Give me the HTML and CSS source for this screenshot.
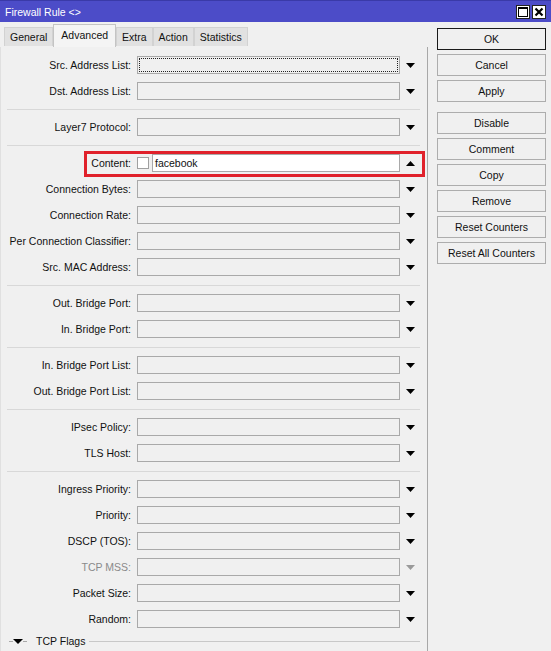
FILE: index.html
```html
<!DOCTYPE html>
<html lang="en">
<head>
    <meta charset="UTF-8">
    <title>Firewall Rule</title>
    <link rel="stylesheet" href="styles.css">
</head>
<body>

<div class="window">
    <div class="titlebar">
        <span class="title">Firewall Rule &lt;&gt;</span>
        <div class="wbtns">
            <span class="wbtn">
                <svg width="10" height="10" viewBox="0 0 10 10"><rect x="0.5" y="0.5" width="9" height="9" fill="none" stroke="#000"/><rect x="0" y="0" width="10" height="2" fill="#000"/></svg>
            </span>
            <span class="wbtn">
                <svg width="10" height="10" viewBox="0 0 10 10"><path d="M1.5 1.5 L8.5 8.5 M8.5 1.5 L1.5 8.5" stroke="#000" stroke-width="2.2"/></svg>
            </span>
        </div>
    </div>

    <div class="main">
        <div class="left">
            <div class="tabs">
                <span class="tab">General</span>
                <span class="tab active">Advanced</span>
                <span class="tab">Extra</span>
                <span class="tab">Action</span>
                <span class="tab">Statistics</span>
            </div>

            <div class="panel">
                <div class="row">
                    <label>Src. Address List:</label>
                    <span class="field focus"></span>
                    <span class="arrow"><svg width="9" height="5"><polygon points="0,0 9,0 4.5,5"/></svg></span>
                </div>
                <div class="row">
                    <label>Dst. Address List:</label>
                    <span class="field"></span>
                    <span class="arrow"><svg width="9" height="5"><polygon points="0,0 9,0 4.5,5"/></svg></span>
                </div>

                <div class="sep"></div>

                <div class="row">
                    <label>Layer7 Protocol:</label>
                    <span class="field"></span>
                    <span class="arrow"><svg width="9" height="5"><polygon points="0,0 9,0 4.5,5"/></svg></span>
                </div>

                <div class="sep"></div>

                <div class="row marked">
                    <label>Content:</label>
                    <span class="check"></span>
                    <span class="field value">facebook</span>
                    <span class="arrow"><svg width="9" height="5"><polygon points="0,5 9,5 4.5,0"/></svg></span>
                </div>
                <div class="row">
                    <label>Connection Bytes:</label>
                    <span class="field"></span>
                    <span class="arrow"><svg width="9" height="5"><polygon points="0,0 9,0 4.5,5"/></svg></span>
                </div>
                <div class="row">
                    <label>Connection Rate:</label>
                    <span class="field"></span>
                    <span class="arrow"><svg width="9" height="5"><polygon points="0,0 9,0 4.5,5"/></svg></span>
                </div>
                <div class="row">
                    <label>Per Connection Classifier:</label>
                    <span class="field"></span>
                    <span class="arrow"><svg width="9" height="5"><polygon points="0,0 9,0 4.5,5"/></svg></span>
                </div>
                <div class="row">
                    <label>Src. MAC Address:</label>
                    <span class="field"></span>
                    <span class="arrow"><svg width="9" height="5"><polygon points="0,0 9,0 4.5,5"/></svg></span>
                </div>

                <div class="sep"></div>

                <div class="row">
                    <label>Out. Bridge Port:</label>
                    <span class="field"></span>
                    <span class="arrow"><svg width="9" height="5"><polygon points="0,0 9,0 4.5,5"/></svg></span>
                </div>
                <div class="row">
                    <label>In. Bridge Port:</label>
                    <span class="field"></span>
                    <span class="arrow"><svg width="9" height="5"><polygon points="0,0 9,0 4.5,5"/></svg></span>
                </div>

                <div class="sep"></div>

                <div class="row">
                    <label>In. Bridge Port List:</label>
                    <span class="field"></span>
                    <span class="arrow"><svg width="9" height="5"><polygon points="0,0 9,0 4.5,5"/></svg></span>
                </div>
                <div class="row">
                    <label>Out. Bridge Port List:</label>
                    <span class="field"></span>
                    <span class="arrow"><svg width="9" height="5"><polygon points="0,0 9,0 4.5,5"/></svg></span>
                </div>

                <div class="sep"></div>

                <div class="row">
                    <label>IPsec Policy:</label>
                    <span class="field"></span>
                    <span class="arrow"><svg width="9" height="5"><polygon points="0,0 9,0 4.5,5"/></svg></span>
                </div>
                <div class="row">
                    <label>TLS Host:</label>
                    <span class="field"></span>
                    <span class="arrow"><svg width="9" height="5"><polygon points="0,0 9,0 4.5,5"/></svg></span>
                </div>

                <div class="sep"></div>

                <div class="row">
                    <label>Ingress Priority:</label>
                    <span class="field"></span>
                    <span class="arrow"><svg width="9" height="5"><polygon points="0,0 9,0 4.5,5"/></svg></span>
                </div>
                <div class="row">
                    <label>Priority:</label>
                    <span class="field"></span>
                    <span class="arrow"><svg width="9" height="5"><polygon points="0,0 9,0 4.5,5"/></svg></span>
                </div>
                <div class="row">
                    <label>DSCP (TOS):</label>
                    <span class="field"></span>
                    <span class="arrow"><svg width="9" height="5"><polygon points="0,0 9,0 4.5,5"/></svg></span>
                </div>
                <div class="row disabled">
                    <label>TCP MSS:</label>
                    <span class="field"></span>
                    <span class="arrow"><svg width="9" height="5"><polygon points="0,0 9,0 4.5,5"/></svg></span>
                </div>
                <div class="row">
                    <label>Packet Size:</label>
                    <span class="field"></span>
                    <span class="arrow"><svg width="9" height="5"><polygon points="0,0 9,0 4.5,5"/></svg></span>
                </div>
                <div class="row">
                    <label>Random:</label>
                    <span class="field"></span>
                    <span class="arrow"><svg width="9" height="5"><polygon points="0,0 9,0 4.5,5"/></svg></span>
                </div>

                <div class="flags">
                    <span class="line short"></span>
                    <svg width="10" height="5"><polygon points="0,0 10,0 5,5"/></svg>
                    <span class="line short"></span>
                    <span class="flags-title">TCP Flags</span>
                    <span class="line long"></span>
                </div>
            </div>
        </div>

        <div class="buttons">
            <span class="btn default">OK</span>
            <span class="btn">Cancel</span>
            <span class="btn">Apply</span>
            <span class="btn gap">Disable</span>
            <span class="btn">Comment</span>
            <span class="btn">Copy</span>
            <span class="btn">Remove</span>
            <span class="btn">Reset Counters</span>
            <span class="btn">Reset All Counters</span>
        </div>
    </div>
</div>

</body>
</html>
```

FILE: styles.css
```css
html, body {
    margin: 0;
    padding: 0;
    height: 100%;
}

body {
    background: #f0f0f0;
    font-family: "Liberation Sans", Arial, sans-serif;
    font-size: 10.5px;
    color: #111;
    overflow: hidden;
}

.window {
    width: 551px;
    height: 651px;
    display: flex;
    flex-direction: column;
}

/* title bar */
.titlebar {
    height: 22px;
    background: #4c4cc8;
    border-top: 1px solid #3a3aa8;
    box-sizing: border-box;
    display: flex;
    align-items: center;
    justify-content: space-between;
    padding: 0 5px 0 5px;
}

.title {
    color: #fff;
    font-size: 10.5px;
}

.wbtns {
    display: flex;
    gap: 2px;
}

.wbtn {
    width: 14px;
    height: 14px;
    box-sizing: border-box;
    background: #fff;
    border: 1px solid #222;
    display: flex;
    align-items: center;
    justify-content: center;
}

.wbtn svg {
    display: block;
}

.main {
    flex: 1;
    display: flex;
}

/* left side with tabs */
.left {
    width: 428px;
    display: flex;
    flex-direction: column;
}

.tabs {
    height: 25px;
    box-sizing: border-box;
    display: flex;
    align-items: flex-end;
    padding-left: 4px;
}

.tab {
    height: 19px;
    box-sizing: border-box;
    padding: 0 5px;
    line-height: 18px;
    background: #e1e1e1;
    border: 1px solid #d2d2d2;
    border-bottom: none;
    margin-bottom: 1px;
}

.tab.active {
    height: 23px;
    line-height: 20px;
    background: #f4f4f4;
    border-color: #c4c4c4;
    margin-bottom: 0;
    padding: 0 7px;
}

.panel {
    flex: 1;
    border-right: 1px solid #a8a8a8;
    border-left: 1px solid #e0e0e0;
    padding-top: 5px;
}

.row {
    height: 26px;
    display: flex;
    align-items: center;
    position: relative;
}

.row label {
    width: 130px;
    text-align: right;
    margin-right: 6px;
    white-space: nowrap;
}

.field {
    width: 263px;
    height: 18px;
    box-sizing: border-box;
    border: 1px solid #a9a9a9;
    background: #f0f0f0;
    position: relative;
}

.field.focus:after {
    content: '';
    position: absolute;
    left: 1px;
    top: 1px;
    right: 1px;
    bottom: 1px;
    border: 1px dotted #222;
}

.field.value {
    width: 248px;
    background: #fff;
    padding-left: 2px;
    line-height: 16px;
}

.check {
    width: 12px;
    height: 12px;
    box-sizing: border-box;
    border: 1px solid #a0a0a0;
    background: #fff;
    margin-right: 3px;
}

.arrow {
    width: 21px;
    display: flex;
    justify-content: center;
}

.arrow svg {
    display: block;
    fill: #000;
}

/* red highlight around Content row */
.row.marked:after {
    content: '';
    position: absolute;
    left: 83px;
    top: 1px;
    width: 341px;
    height: 26px;
    box-sizing: border-box;
    border: 3px solid #e0212b;
}

.row.disabled label {
    color: #8a8a8a;
}

.row.disabled .arrow svg {
    fill: #9a9a9a;
}

.sep {
    height: 10px;
    display: flex;
    align-items: center;
    padding: 0 7px 0 6px;
}

.sep:before {
    content: '';
    flex: 1;
    height: 1px;
    background: #d8d8d8;
}

.flags {
    height: 18px;
    display: flex;
    align-items: center;
    padding: 0 7px 0 8px;
}

.flags svg {
    display: block;
    fill: #000;
}

.line {
    height: 1px;
    background: #a8a8a8;
}

.line.short {
    width: 4px;
}

.line.long {
    flex: 1;
    background: #c8c8c8;
}

.flags-title {
    padding: 0 4px 0 9px;
}

/* right button column */
.buttons {
    width: 109px;
    margin-left: 9px;
    padding-top: 6px;
    display: flex;
    flex-direction: column;
    gap: 4px;
}

.btn {
    height: 22px;
    box-sizing: border-box;
    border: 1px solid #adadad;
    background: #f0f0f0;
    display: flex;
    align-items: center;
    justify-content: center;
}

.btn.default {
    border-color: #1a1a1a;
}

.btn.gap {
    margin-top: 6px;
}
```
